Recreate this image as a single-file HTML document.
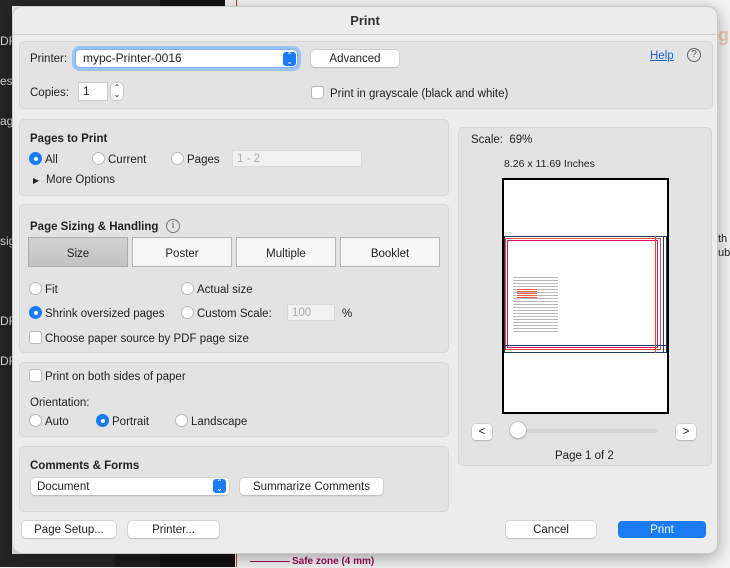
<!DOCTYPE html>
<html><head><meta charset="utf-8"><style>
*{box-sizing:border-box;margin:0;padding:0}
body{width:730px;height:567px;overflow:hidden;position:relative;background:#f4f4f4;font-family:"Liberation Sans",Helvetica,sans-serif;font-size:11.5px;color:#222;line-height:17px}
.a{position:absolute}
.t{position:absolute;transform:translateY(3px)}
.dlg{left:12px;top:6px;width:706px;height:548px;background:#ececec;border:1px solid #c9c9c9;border-radius:10px;box-shadow:0 4px 18px rgba(0,0,0,.35)}
.panel{position:absolute;background:#e3e3e3;border:1px solid #d6d6d6;border-radius:5px}
.btn{position:absolute;background:#fff;border-radius:4px;box-shadow:0 0 0 .5px #bbb,0 1px 1px rgba(0,0,0,.2);text-align:center;height:17px;line-height:17px;font-size:11.5px;padding-top:1px}
.rad{position:absolute;width:13px;height:13px;border-radius:50%;background:#fff;border:1px solid #b8b8b8}
.rad.on{background:#1a7cf5;border-color:#1a7cf5}
.rad.on:after{content:"";position:absolute;left:3.5px;top:3.5px;width:4px;height:4px;border-radius:50%;background:#fff}
.chk{position:absolute;width:13px;height:13px;border-radius:3px;background:#fff;border:1px solid #b8b8b8}
.b{font-weight:bold}
.tab{position:absolute;top:237px;height:30px;background:#f7f7f7;border:1px solid #b5b5b5;text-align:center;line-height:28px;padding-top:2px;font-size:11.5px}
.field{position:absolute;background:#f0f0f0;border:1px solid #dadada;color:#aaa;padding-left:4px;line-height:15px;padding-top:1px}
.pop{position:absolute;width:13px;height:14px;border-radius:3px;background:#1a7cf5;color:#fff;font-size:8px;line-height:6px;text-align:center;padding-top:1px}
</style></head><body>
<div class="a" style="left:0;top:0;width:12px;height:567px;background:#262626"></div>
<div class="a" style="left:0;top:0;width:225px;height:6px;background:#262626"></div>
<div class="a" style="left:160px;top:0;width:65px;height:6px;background:#111"></div>
<div class="a" style="left:0;top:554px;width:235px;height:13px;background:#262626"></div>
<div class="a" style="left:115px;top:554px;width:45px;height:13px;background:#1e1e1e"></div>
<div class="a" style="left:160px;top:554px;width:75px;height:13px;background:#111"></div>
<div class="a" style="left:236px;top:0;width:1px;height:6px;background:#d33"></div>
<div class="a" style="left:236px;top:554px;width:1px;height:13px;background:#d33"></div>
<div class="a" style="left:292px;top:555px;font-size:10px;color:#a0105a;font-weight:bold;line-height:13px">Safe zone (4 mm)</div>
<div class="a" style="left:250px;top:561px;width:40px;height:1px;background:#a0105a"></div>
<div class="t" style="left:0;top:30px;color:#ddd;font-size:12px">DF</div>
<div class="t" style="left:0;top:70px;color:#ddd;font-size:12px">es</div>
<div class="t" style="left:0;top:110px;color:#ddd;font-size:12px">ag</div>
<div class="t" style="left:0;top:230px;color:#ddd;font-size:12px">sig</div>
<div class="t" style="left:0;top:310px;color:#ddd;font-size:12px">DF</div>
<div class="t" style="left:0;top:350px;color:#ddd;font-size:12px">DF</div>
<div class="a" style="left:718px;top:232px;color:#222;font-size:11px;line-height:14px">th<br>ub</div>
<div class="a" style="left:718px;top:24px;color:#f0c8b0;font-size:18px;font-weight:bold;line-height:22px">g</div>

<div class="a dlg">
<div class="a" style="left:0;top:27px;width:704px;height:1px;background:#cfcfcf"></div>
<div class="t b" style="left:0;top:2px;width:704px;text-align:center;font-size:13px;color:#333">Print</div>
<div class="panel" style="left:6px;top:34px;width:694px;height:68px"></div>
<div class="panel" style="left:6px;top:112px;width:430px;height:77px"></div>
<div class="panel" style="left:6px;top:197px;width:430px;height:149px"></div>
<div class="panel" style="left:6px;top:355px;width:430px;height:75px"></div>
<div class="panel" style="left:6px;top:439px;width:430px;height:66px"></div>
<div class="panel" style="left:445px;top:120px;width:254px;height:339px"></div>
</div>

<div class="t" style="left:30px;top:48px">Printer:</div>
<div class="a" style="left:75px;top:49px;width:223px;height:19px;border-radius:5px;background:#fff;box-shadow:0 0 0 3px #9cc3f5;border:1px solid #7fb0ee;padding-left:7px;line-height:17px;font-size:12px">mypc-Printer-0016</div>
<div class="pop" style="left:283px;top:52px">⌃<br>⌄</div>
<div class="btn" style="left:311px;top:50px;width:88px">Advanced</div>
<div class="t" style="left:650px;top:45px;color:#1a64d8;text-decoration:underline">Help</div>
<div class="a" style="left:687px;top:48px;width:14px;height:14px;border:1.3px solid #666;border-radius:50%;font-size:10px;text-align:center;line-height:11px;color:#555">?</div>
<div class="t" style="left:30px;top:82px">Copies:</div>
<div class="a" style="left:78px;top:82px;width:30px;height:19px;background:#fff;border:1px solid #ccc;padding-left:4px;line-height:17px;font-size:12px">1</div>
<div class="a" style="left:111px;top:83px;width:12px;height:17px;background:#fff;border-radius:4px;box-shadow:0 0 0 .5px #aaa;font-size:8px;line-height:7px;text-align:center;padding-top:1px">⌃<br>⌄</div>
<div class="chk" style="left:311px;top:86px"></div>
<div class="t" style="left:330px;top:83px">Print in grayscale (black and white)</div>

<div class="t b" style="left:30px;top:128px">Pages to Print</div>
<div class="rad on" style="left:29px;top:152px"></div><div class="t" style="left:45px;top:149px">All</div>
<div class="rad" style="left:92px;top:152px"></div><div class="t" style="left:108px;top:149px">Current</div>
<div class="rad" style="left:171px;top:152px"></div><div class="t" style="left:187px;top:149px">Pages</div>
<div class="field" style="left:232px;top:150px;width:130px;height:17px">1 - 2</div>
<div class="t" style="left:33px;top:169px;font-size:8px">▶</div><div class="t" style="left:46px;top:169px">More Options</div>

<div class="t b" style="left:30px;top:216px">Page Sizing &amp; Handling</div>
<div class="a" style="left:166px;top:219px;width:14px;height:14px;border:1.3px solid #777;border-radius:50%;font-size:10px;text-align:center;line-height:11px;color:#555;font-family:'Liberation Serif',serif">i</div>
<div class="tab" style="left:28px;width:100px;background:linear-gradient(#d2d2d2,#c2c2c2);border-color:#aaa">Size</div>
<div class="tab" style="left:132px;width:100px">Poster</div>
<div class="tab" style="left:236px;width:100px">Multiple</div>
<div class="tab" style="left:340px;width:100px">Booklet</div>
<div class="rad" style="left:29px;top:282px"></div><div class="t" style="left:45px;top:279px">Fit</div>
<div class="rad" style="left:181px;top:282px"></div><div class="t" style="left:197px;top:279px">Actual size</div>
<div class="rad on" style="left:29px;top:306px"></div><div class="t" style="left:45px;top:303px">Shrink oversized pages</div>
<div class="rad" style="left:181px;top:306px"></div><div class="t" style="left:197px;top:303px">Custom Scale:</div>
<div class="field" style="left:287px;top:304px;width:48px;height:17px">100</div>
<div class="t" style="left:342px;top:303px">%</div>
<div class="chk" style="left:29px;top:331px"></div><div class="t" style="left:45px;top:328px">Choose paper source by PDF page size</div>

<div class="chk" style="left:29px;top:369px"></div><div class="t" style="left:45px;top:366px">Print on both sides of paper</div>
<div class="t" style="left:30px;top:392px">Orientation:</div>
<div class="rad" style="left:29px;top:414px"></div><div class="t" style="left:45px;top:411px">Auto</div>
<div class="rad on" style="left:96px;top:414px"></div><div class="t" style="left:112px;top:411px">Portrait</div>
<div class="rad" style="left:175px;top:414px"></div><div class="t" style="left:191px;top:411px">Landscape</div>

<div class="t b" style="left:30px;top:455px">Comments &amp; Forms</div>
<div class="btn" style="left:31px;top:478px;width:198px;text-align:left;padding-left:6px">Document</div>
<div class="pop" style="left:213px;top:479px">⌃<br>⌄</div>
<div class="btn" style="left:240px;top:478px;width:143px">Summarize Comments</div>

<div class="btn" style="left:22px;top:521px;width:94px">Page Setup...</div>
<div class="btn" style="left:128px;top:521px;width:91px">Printer...</div>
<div class="btn" style="left:506px;top:521px;width:90px">Cancel</div>
<div class="btn" style="left:618px;top:521px;width:88px;background:#1a7cf5;color:#fff;box-shadow:none">Print</div>

<div class="t" style="left:471px;top:129px">Scale:&nbsp; 69%</div>
<div class="t" style="left:504px;top:153px;font-size:10.5px">8.26 x 11.69 Inches</div>
<div class="a" style="left:502px;top:178px;width:167px;height:236px;background:#fff;border:2px solid #000"></div>
<div class="a" style="left:504px;top:236px;width:163px;height:117px;border:1px solid #1c3a66"></div>
<div class="a" style="left:505px;top:238px;width:156px;height:112px;border:1px solid #e04a30"></div>
<div class="a" style="left:507px;top:240px;width:151px;height:108px;border:1px solid #e0106a"></div>
<div class="a" style="left:504px;top:345px;width:163px;height:1px;background:#1c3a66"></div>
<div class="a" style="left:655px;top:236px;width:1px;height:117px;background:#e04a30"></div>
<div class="a" style="left:663px;top:236px;width:1px;height:117px;background:#1c3a66"></div>
<div class="a" style="left:513px;top:277px;width:45px;height:55px;background:repeating-linear-gradient(#999 0 1px,transparent 1px 3px);opacity:.7"></div>
<div class="a" style="left:517px;top:289px;width:20px;height:10px;background:repeating-linear-gradient(#f06040 0 1px,transparent 1px 2px)"></div>
<div class="btn" style="left:472px;top:424px;width:20px;height:16px;line-height:15px">&lt;</div>
<div class="btn" style="left:676px;top:424px;width:20px;height:16px;line-height:15px">&gt;</div>
<div class="a" style="left:515px;top:429px;width:142px;height:4px;border-radius:2px;background:#d2d2d2"></div>
<div class="a" style="left:510px;top:422px;width:16px;height:16px;border-radius:50%;background:#fff;box-shadow:0 0 0 .5px #aaa,0 1px 2px rgba(0,0,0,.3)"></div>
<div class="t" style="left:555px;top:445px">Page 1 of 2</div>
</body></html>
